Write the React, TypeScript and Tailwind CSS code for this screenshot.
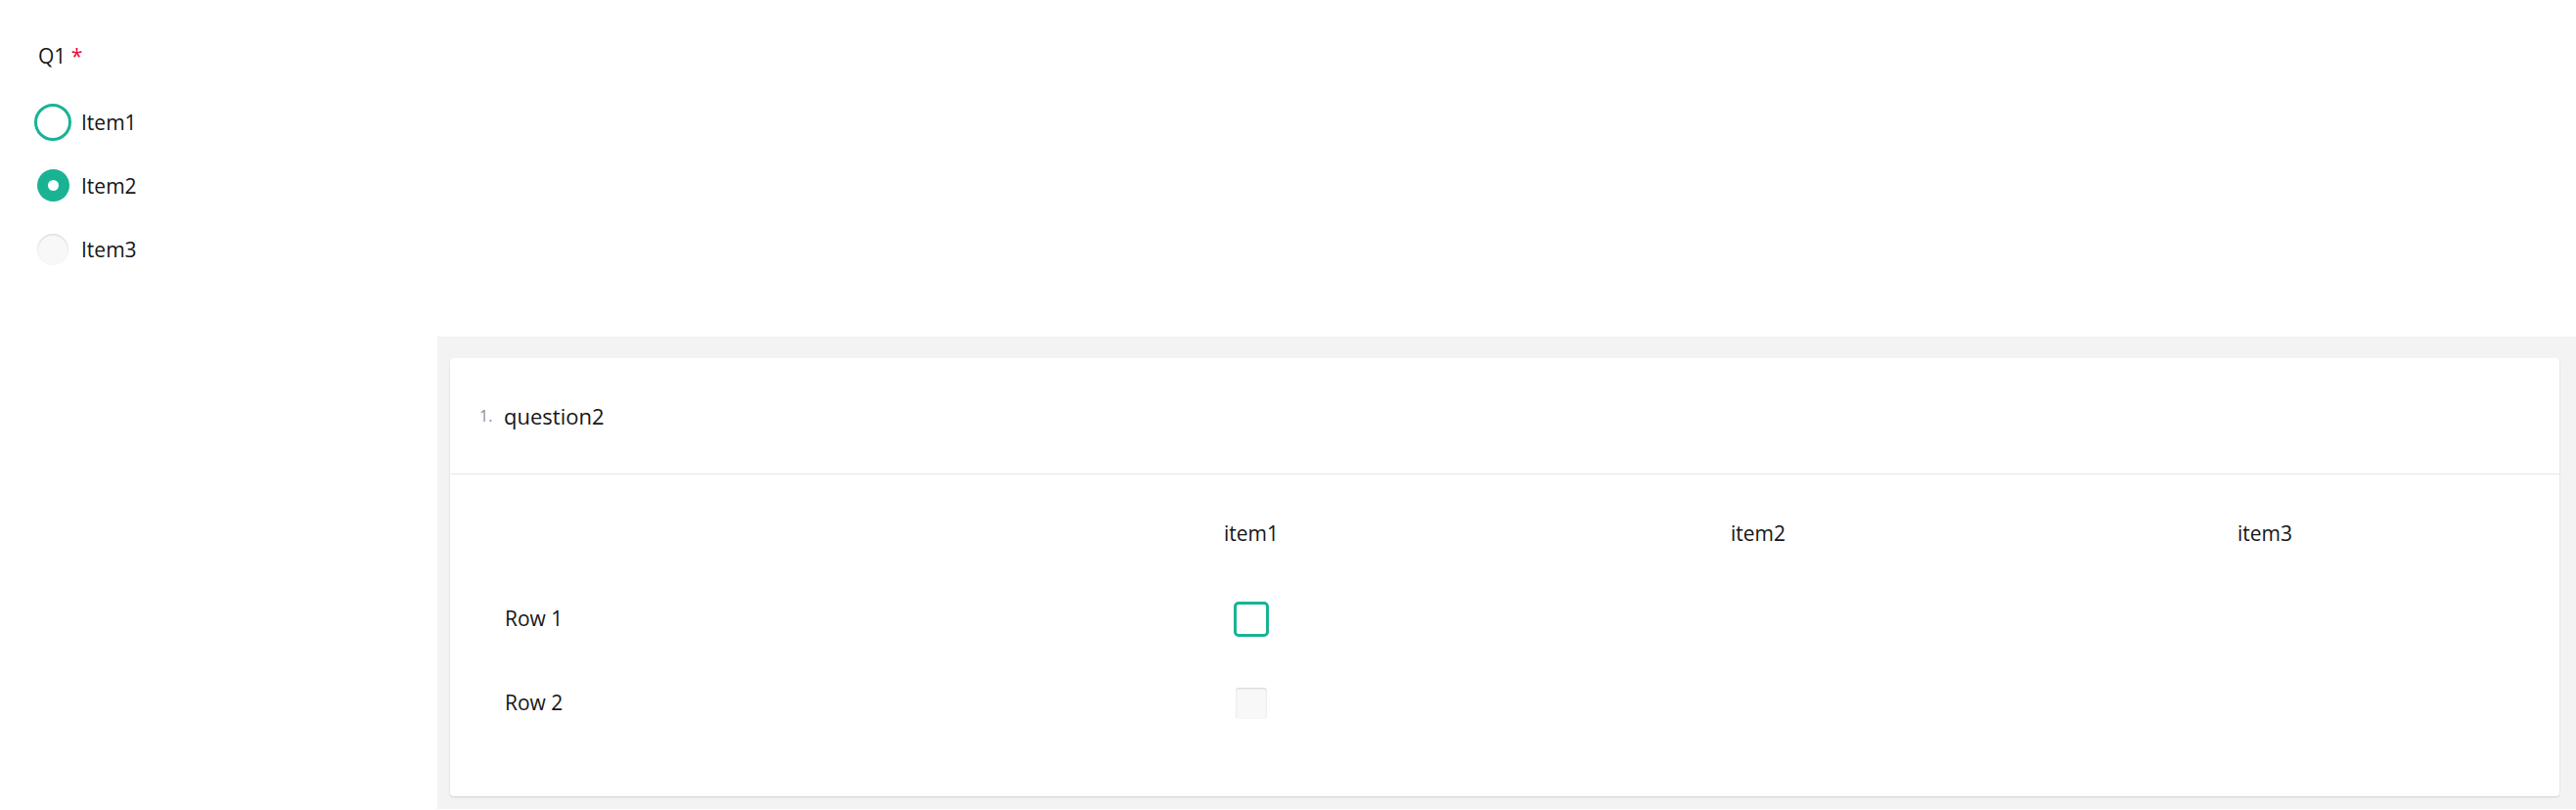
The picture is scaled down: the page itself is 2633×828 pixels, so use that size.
const font = "font-['Open_Sans',_'Noto_Sans',_sans-serif]";

function RadioItem({ label, state }: { label: string; state: "focus" | "checked" | "empty" }) {
  return (
    <div className="flex h-[65px] items-center">
      <div className="flex h-[38px] w-[38px] items-center justify-center">
        {state === "focus" && (
          <div className="h-[38px] w-[38px] rounded-full border-[3.5px] border-[#19b394] bg-white" />
        )}
        {state === "checked" && (
          <div className="flex h-[33px] w-[33px] items-center justify-center rounded-full bg-[#19b394]">
            <div className="h-[11px] w-[11px] rounded-full bg-white" />
          </div>
        )}
        {state === "empty" && (
          <div className="h-[32px] w-[32px] rounded-full bg-[#f8f8f8] shadow-[inset_0_1px_2px_rgba(0,0,0,0.15)]" />
        )}
      </div>
      <span className="ml-[10px] text-[21px] leading-[28px] text-[#161616]">{label}</span>
    </div>
  );
}

export default function App() {
  const cols = ["item1", "item2", "item3"];
  return (
    <div className={`${font} min-h-[828px] w-[2633px] bg-white`}>
      {/* Q1 radio group */}
      <div className="h-[344px] pl-[35px] pt-[43px]">
        <div className="pl-[4px] text-[21px] leading-[28px] text-[#161616]">
          Q1 <span className="text-[#e60a3e]">*</span>
        </div>
        <div className="mt-[21px]">
          <RadioItem label="Item1" state="focus" />
          <RadioItem label="Item2" state="checked" />
          <RadioItem label="Item3" state="empty" />
        </div>
      </div>

      {/* matrix panel */}
      <div className="ml-[447px] bg-[#f3f3f3] pb-[13px] pl-[13px] pr-[17px] pt-[22px]">
        <div className="rounded-[4px] bg-white shadow-[0_1px_2px_rgba(0,0,0,0.15)]">
          <div className="flex h-[119px] items-center border-b border-[#e6e6e6] pl-[30px]">
            <span className="w-[25px] text-[16px] text-[#909090]">1.</span>
            <span className="text-[22px] text-[#161616]">question2</span>
          </div>
          <div className="pb-[52px] pl-[56px] pr-[42px] pt-[20px] text-[21px] text-[#161616]">
            <div className="grid h-[85px] grid-cols-[1fr_518px_518px_518px] items-center">
              <div />
              {cols.map((c) => (
                <div key={c} className="pb-[3px] text-center">
                  {c}
                </div>
              ))}
            </div>
            <div className="grid h-[86px] grid-cols-[1fr_518px_518px_518px] items-center">
              <div>Row 1</div>
              <div className="flex justify-center">
                <div className="h-[36px] w-[36px] rounded-[5px] border-[3.5px] border-[#19b394] bg-white" />
              </div>
              <div />
              <div />
            </div>
            <div className="grid h-[86px] grid-cols-[1fr_518px_518px_518px] items-center">
              <div>Row 2</div>
              <div className="flex justify-center">
                <div className="h-[32px] w-[32px] rounded-[3px] bg-[#f8f8f8] shadow-[inset_0_1px_2px_rgba(0,0,0,0.15)]" />
              </div>
              <div />
              <div />
            </div>
          </div>
        </div>
      </div>
    </div>
  );
}
